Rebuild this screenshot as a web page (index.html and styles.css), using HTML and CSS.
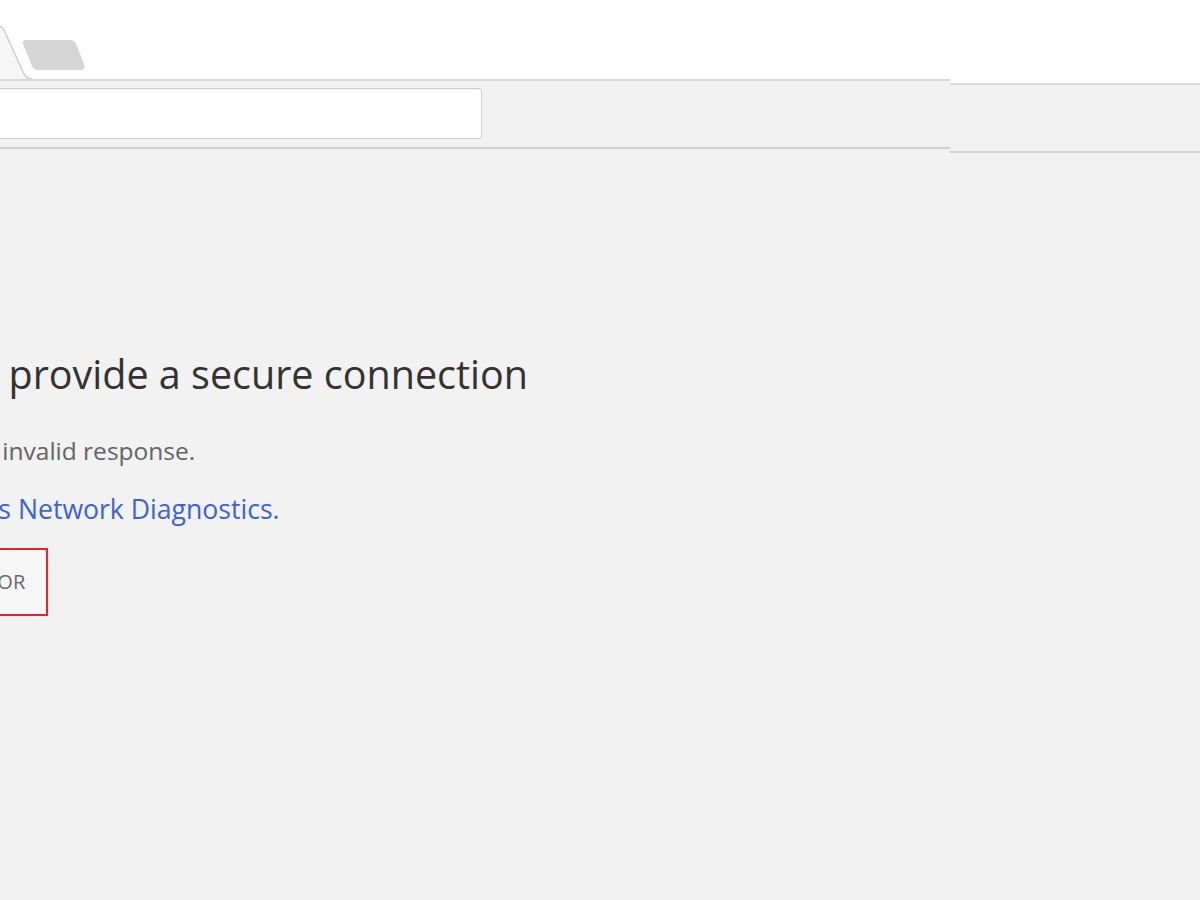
FILE: index.html
```html
<!DOCTYPE html>
<html lang="en">
<head>
<meta charset="utf-8">
<title>This site can't provide a secure connection</title>
<link rel="stylesheet" href="styles.css">
</head>
<body>
<header class="chrome">
  <div class="chrome-main">
    <div class="tabstrip">
      <svg class="tabs" width="100" height="79" viewBox="0 0 100 79" aria-hidden="true">
        <path d="M-10 26 L-2 26 Q2 26 4 30 L24 74 Q27 79 32 79 L-10 79 Z" fill="#f6f6f6"/>
        <path d="M-10 26 L-2 26 Q2 26 4 30 L24 74 Q27 79 32 79" fill="none" stroke="#cfcfcf" stroke-width="1.6"/>
        <path d="M26 40 L70 40 Q74 40 76 44 L84 64 Q86 70 80 70 L38 70 Q34 70 32 66 L23 44 Q22 40 26 40 Z" fill="#d6d6d6"/>
      </svg>
    </div>
    <div class="toolbar">
      <div class="omnibox"></div>
    </div>
  </div>
  <div class="chrome-side">
    <div class="toolbar"></div>
  </div>
</header>
<main class="page">
  <div class="error">
    <h1 class="error-title">This site can’t provide a secure connection</h1>
    <p class="error-desc">example.com sent an invalid response.</p>
    <ul class="error-tips">
      <li><a class="error-link" href="#">Try running Windows Network Diagnostics.</a></li>
    </ul>
    <div class="error-code">ERR_SSL_PROTOCOL_ERROR</div>
  </div>
</main>
</body>
</html>
```
FILE: styles.css
```css
html, body {
  margin: 0;
  padding: 0;
}
body {
  width: 1200px;
  height: 900px;
  overflow: hidden;
  background: #f2f2f2;
  font-family: "Open Sans", "Noto Sans", sans-serif;
}
.chrome {
  display: flex;
  align-items: flex-start;
  height: 153px;
}
.chrome-main {
  width: 950px;
  flex: none;
}
.tabstrip {
  height: 79px;
  background: #ffffff;
}
.tabs {
  display: block;
}
.toolbar {
  box-sizing: border-box;
  height: 70px;
  background: #f1f1f1;
  border-top: 2px solid #d8d8d8;
  border-bottom: 2px solid #d0d0d0;
  padding-top: 7px;
}
.chrome-side {
  flex: 1;
  padding-top: 83px;
  background: #ffffff;
}
.omnibox {
  box-sizing: border-box;
  width: 492px;
  height: 51px;
  margin-left: -10px;
  background: #ffffff;
  border: 1.5px solid #cfcfcf;
  border-radius: 3px;
  box-shadow: inset 0 1px 1px rgba(0, 0, 0, 0.04);
}
.page {
  background: #f2f2f2;
}
.error {
  margin-left: -248px;
  padding-top: 197px;
  width: 1200px;
}
.error-title {
  margin: 0;
  font-weight: 400;
  font-size: 39.5px;
  line-height: 48px;
  color: #333333;
  white-space: nowrap;
}
.error-desc {
  margin: 37px 0 0;
  font-size: 24.5px;
  line-height: 32px;
  color: #646464;
  white-space: nowrap;
}
.error-tips {
  list-style: none;
  margin: 25px 0 0 -4px;
  padding: 0;
}
.error-link {
  display: block;
  font-size: 26.6px;
  line-height: 34px;
  color: #3d62d6;
  text-decoration: none;
  white-space: nowrap;
}
.error-code {
  width: max-content;
  margin-top: 22px;
  padding: 18px 21px 18px 8px;
  border: 2px solid #e8232d;
  background: #f6f6f6;
  font-size: 20px;
  line-height: 28px;
  color: #686868;
}
```
